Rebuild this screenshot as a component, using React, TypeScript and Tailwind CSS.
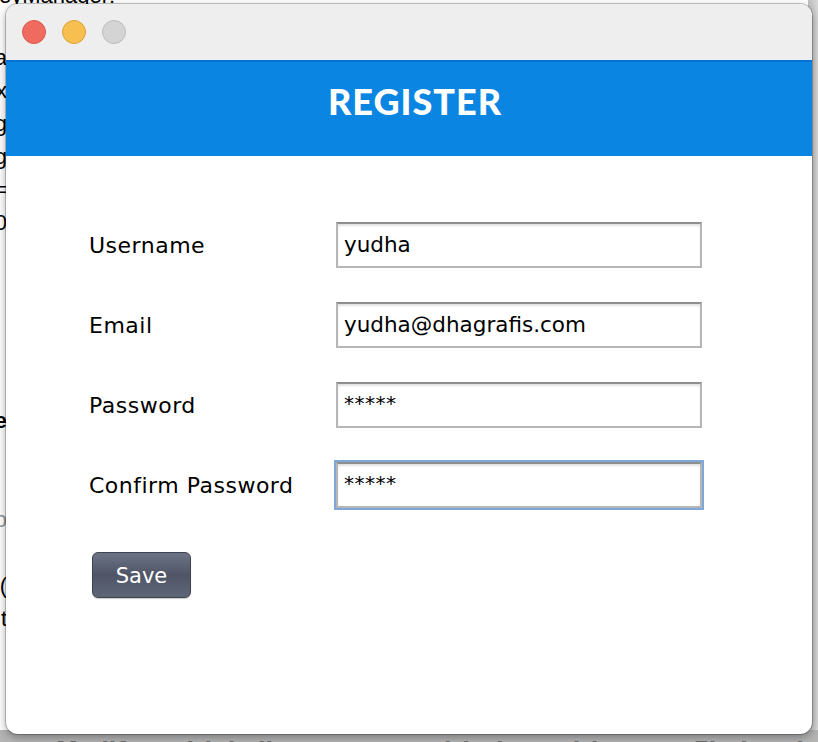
import React from 'react';

const editorLines = ['', 'a', 'x', 'g', 'g', '=', '0', '', '', '', '', '', 'e', '', '', 'o', '', '(', 't', '', ''];

const fields = [
  { label: 'Username', value: 'yudha' },
  { label: 'Email', value: 'yudha@dhagrafis.com' },
  { label: 'Password', value: '*****' },
  { label: 'Confirm Password', value: '*****', focused: true },
];

function Backdrop() {
  return (
    <div className="flex h-full w-full flex-col">
      <div className="flex flex-1 flex-row">
        <div className="flex flex-1 flex-col bg-white font-['Liberation_Sans',sans-serif] text-[22px] text-black">
          <div className="-mt-[17px] h-[25px] whitespace-nowrap leading-[25px] -ml-[1px]">eyManager:</div>
          <div className="flex w-[7px] flex-col overflow-hidden">
            {editorLines.map((ch, i) => (
              <div
                key={i}
                className={`flex h-[33px] justify-end whitespace-nowrap leading-[33px] ${ch === 'o' ? 'text-[#999]' : ''} ${ch === 'e' ? 'font-bold' : ''}`}
              >
                {ch}
              </div>
            ))}
          </div>
        </div>
        <div className="w-[10px] bg-gradient-to-r from-[#bdbdbd] to-[#d9d9d9]" />
      </div>
      <div className="h-[12px] overflow-hidden bg-[#b4b4b4] pl-[56px] pt-[8px] font-['DejaVu_Sans',sans-serif] text-[22px] font-bold leading-[24px] whitespace-nowrap text-[#6c6c6c]">
        Modify multiple lines at once with the multi-cursor Find tool
      </div>
    </div>
  );
}

function Field({ value, focused }: { value: string; focused?: boolean }) {
  return (
    <div
      className={`flex h-[46px] w-[366px] items-center border-2 border-[#b6b6b6] border-t-[#8e8e8e] bg-white pl-[6px] shadow-[inset_0_2px_2px_rgba(0,0,0,0.12)] ${focused ? 'ring-2 ring-[#7ea8d8]' : ''}`}
    >
      <span className={value.startsWith('*') ? 'text-[20px] -mt-[4px] tracking-[0.5px]' : 'text-[21.5px]'}>{value}</span>
    </div>
  );
}

export default function App() {
  return (
    <div className="relative h-[742px] w-[818px] overflow-hidden bg-white">
      <Backdrop />
      <div className="absolute left-[6px] top-[4px] flex h-[730px] w-[806px] flex-col overflow-hidden rounded-[12px] bg-white shadow-[0_0_0_1px_rgba(0,0,0,0.22),0_3px_10px_rgba(0,0,0,0.35)]">
        <div className="flex h-[56px] shrink-0 items-center gap-[16px] bg-[#eeeeee] pl-[16px]">
          <span className="h-[24px] w-[24px] rounded-full border border-[#dc5a4f] bg-[#ef6b60]" />
          <span className="h-[24px] w-[24px] rounded-full border border-[#dda33a] bg-[#f6bf50]" />
          <span className="h-[24px] w-[24px] rounded-full border border-[#bcbcbc] bg-[#d4d4d4]" />
        </div>
        <div className="flex h-[96px] shrink-0 items-center justify-center border-t-2 border-[#0470d2] bg-[#0a85e2] pb-[16px] pl-[12px]">
          <h1 className="font-['Lato',sans-serif] text-[36px] font-black leading-none tracking-[1px] text-white">REGISTER</h1>
        </div>
        <div className="flex flex-1 flex-col pl-[83px] pt-[66px] font-['DejaVu_Sans',sans-serif] text-black">
          <div className="grid grid-cols-[247px_366px] gap-y-[34px]">
            {fields.map((f) => (
              <React.Fragment key={f.label}>
                <div className="flex items-center text-[22px] tracking-[0.5px]">{f.label}</div>
                <Field value={f.value} focused={f.focused} />
              </React.Fragment>
            ))}
          </div>
          <button className="ml-[3px] mt-[44px] flex h-[46px] w-[99px] items-center justify-center rounded-[6px] border border-[#3e4350] bg-gradient-to-b from-[#6d7485] via-[#4f5567] to-[#5f6678] pt-[3px] text-[21px] text-white shadow-[0_1px_1px_rgba(0,0,0,0.2)]">
            Save
          </button>
        </div>
      </div>
    </div>
  );
}
